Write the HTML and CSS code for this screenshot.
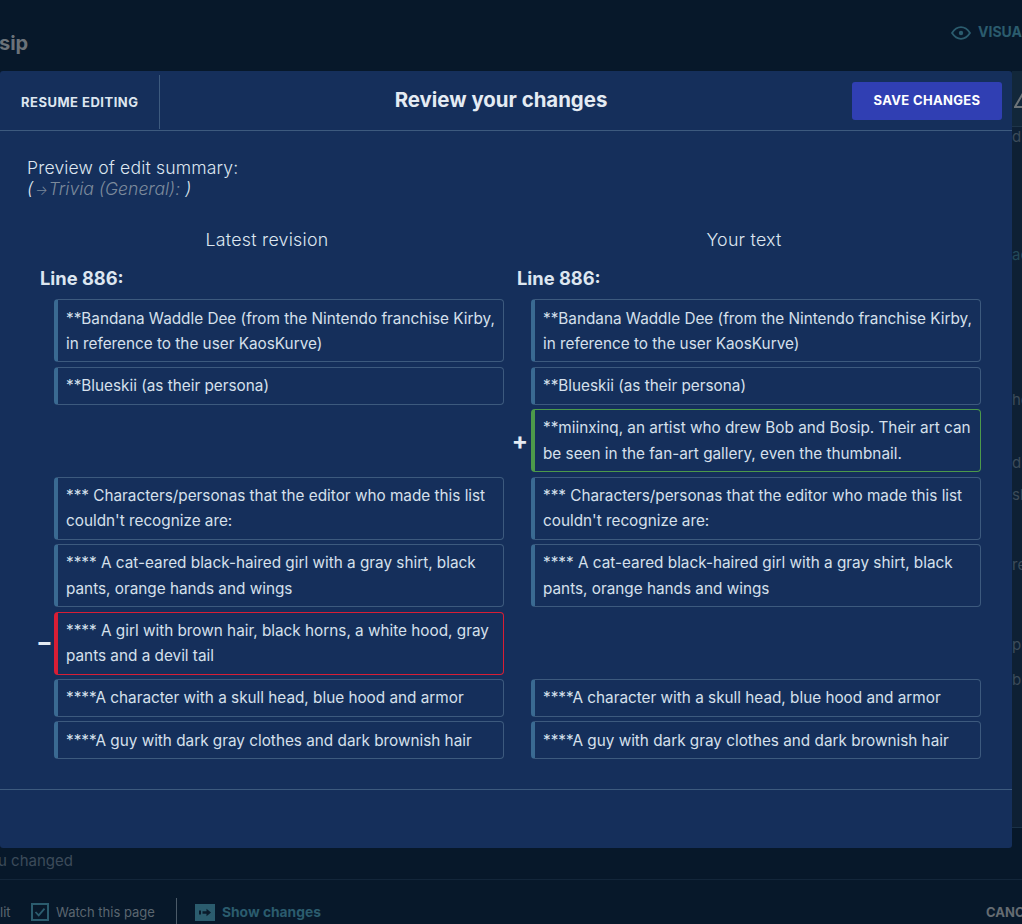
FILE: index.html
```html
<!DOCTYPE html>
<html lang="en">
<head>
<meta charset="utf-8">
<title>Review your changes</title>
<link rel="stylesheet" href="styles.css">
</head>
<body>
<div class="page">
  <header class="topbar">
    <h1 class="page-title">sip</h1>
    <div class="mode">
      <svg class="eye" width="20" height="14" viewBox="0 0 20 14" fill="none"><path d="M1 7c2.500-3.800 5.500-5.800 9-5.800s6.500 2 9 5.800c-2.500 3.800-5.500 5.800-9 5.800S3.500 10.800 1 7z" stroke="#2b5c6e" stroke-width="1.800"/><circle cx="10" cy="7" r="2.200" fill="#2b5c6e"/></svg>
      <span>VISUA</span>
    </div>
  </header>
  <div class="middle">
    <aside class="strip">
      <div class="strip-head">
        <svg width="14" height="22" viewBox="0 0 14 22" fill="none"><path d="M1 21 L12 2 L24 21 Z" stroke="#6c7378" stroke-width="2"/></svg>
      </div>
      <p class="frag f1">d</p>
      <p class="frag f2 teal">ac</p>
      <p class="frag f3">he</p>
      <p class="frag f4">di</p>
      <p class="frag f5">sh</p>
      <p class="frag f6">re</p>
      <p class="frag f7">pla</p>
      <p class="frag f8">b</p>
    </aside>
  </div>
  <div class="summary-row"><span>u changed</span></div>
  <footer class="bottombar">
    <span class="muted lit">lit</span>
    <svg class="check" width="18" height="18" viewBox="0 0 18 18" fill="none"><rect x="1" y="1" width="16" height="16" stroke="#2b5c6e" stroke-width="2"/><path d="M4.500 9l3.200 3.400 5.800-6.800" stroke="#2b5c6e" stroke-width="1.800"/></svg>
    <span class="muted watch">Watch this page</span>
    <span class="vr"></span>
    <svg class="diff-icon" width="20" height="17" viewBox="0 0 20 17"><rect width="20" height="17" fill="#2b5c6e"/><path d="M4 6.500h2v4H4zM7.500 7.300h4V4.800l4.500 3.700-4.500 3.700V9.700h-4z" fill="#0a1b2c"/></svg>
    <span class="show">Show changes</span>
    <span class="cancel">CANC</span>
  </footer>

  <section class="modal">
    <div class="modal-head">
      <button class="resume">RESUME EDITING</button>
      <h2 class="modal-title">Review your changes</h2>
      <button class="save">SAVE CHANGES</button>
    </div>
    <div class="modal-body">
      <p class="preview">Preview of edit summary:<br><em class="sum-line">(<span class="sum"><span class="arrow">→</span>Trivia (General): </span>)</em></p>
      <div class="columns">
        <div class="col-title">Latest revision</div>
        <div class="col-title">Your text</div>
      </div>
      <div class="diff">
        <div class="line-no">Line 886:</div>
        <div class="line-no">Line 886:</div>

        <span></span><div class="cell">**Bandana Waddle Dee (from the Nintendo franchise Kirby, in reference to the user KaosKurve)</div>
        <span></span><div class="cell">**Bandana Waddle Dee (from the Nintendo franchise Kirby, in reference to the user KaosKurve)</div>

        <span></span><div class="cell">**Blueskii (as their persona)</div>
        <span></span><div class="cell">**Blueskii (as their persona)</div>

        <span></span><span></span>
        <span class="mark">+</span><div class="cell added">**miinxinq, an artist who drew Bob and Bosip. Their art can be seen in the fan-art gallery, even the thumbnail.</div>

        <span></span><div class="cell">*** Characters/personas that the editor who made this list couldn't recognize are:</div>
        <span></span><div class="cell">*** Characters/personas that the editor who made this list couldn't recognize are:</div>

        <span></span><div class="cell">**** A cat-eared black-haired girl with a gray shirt, black pants, orange hands and wings</div>
        <span></span><div class="cell">**** A cat-eared black-haired girl with a gray shirt, black pants, orange hands and wings</div>

        <span class="mark minus">−</span><div class="cell removed">**** A girl with brown hair, black horns, a white hood, gray pants and a devil tail</div>
        <span></span><span></span>

        <span></span><div class="cell">****A character with a skull head, blue hood and armor</div>
        <span></span><div class="cell">****A character with a skull head, blue hood and armor</div>

        <span></span><div class="cell">****A guy with dark gray clothes and dark brownish hair</div>
        <span></span><div class="cell">****A guy with dark gray clothes and dark brownish hair</div>
      </div>
    </div>
  </section>
</div>
</body>
</html>
```
FILE: styles.css
```css
* { box-sizing: border-box; }
html, body { margin: 0; padding: 0; }
body {
  background: #07182a;
  font-family: "Inter", "Liberation Sans", sans-serif;
  color: #dde6f0;
}
.page {
  position: relative;
  width: 1022px;
  height: 924px;
  overflow: hidden;
  display: flex;
  flex-direction: column;
}
.topbar {
  height: 71px;
  flex: none;
  display: flex;
  justify-content: space-between;
  align-items: flex-start;
}
.page-title {
  margin: 31px 0 0 -1px;
  font-size: 20px;
  line-height: 24px;
  font-weight: 700;
  color: #6b7279;
}
.mode {
  display: flex;
  align-items: flex-start;
  gap: 7px;
  width: 71px;
  margin-top: 23px;
  font-size: 14px;
  font-weight: 700;
  line-height: 17px;
  color: #2b5c6e;
  overflow: hidden;
  white-space: nowrap;
}
.eye { flex: none; margin-top: 3px; }
.middle {
  height: 757px;
  flex: none;
  display: flex;
  justify-content: flex-end;
}
.strip {
  width: 10px;
  background: #0e2034;
  border-bottom: 1px solid #1b3146;
  overflow: hidden;
  color: #3c4b5a;
  font-size: 15px;
  line-height: 20px;
}
.strip-head {
  height: 56px;
  padding: 15px 0 0 2px;
  background: #12273a;
  border-bottom: 1px solid #1f3549;
}
.frag { margin: 0; white-space: nowrap; }
.teal { color: #23495a; }
.f1 { margin-top: 0; }
.f2 { margin-top: 98px; }
.f3 { margin-top: 125px; }
.f4 { margin-top: 43px; }
.f5 { margin-top: 12px; }
.f6 { margin-top: 50px; }
.f7 { margin-top: 60px; }
.f8 { margin-top: 15px; }
.summary-row {
  height: 52px;
  flex: none;
  border-bottom: 1px solid #13263a;
  padding-top: 23px;
  color: #3c4b5a;
  font-size: 15px;
  line-height: 20px;
}
.summary-row span { display: block; margin-left: -2px; }
.bottombar {
  flex: 1;
  display: flex;
  align-items: center;
  padding-top: 19px;
  font-size: 13px;
  white-space: nowrap;
}
.muted { color: #5b6670; }
.lit { width: 31px; }
.check { flex: none; margin-right: 7px; }
.watch { width: 121px; }
.vr { width: 1px; height: 27px; background: #4b5a68; margin-top: -1px; margin-left: -1px; }
.diff-icon { flex: none; margin-left: 18px; margin-right: 7px; }
.show { font-weight: 700; font-size: 13.800px; color: #2b5c6e; }
.cancel { margin-left: auto; width: 36px; overflow: hidden; font-weight: 700; color: #656c72; }

.modal {
  position: absolute;
  top: 71px;
  left: 0;
  width: 1012px;
  height: 777px;
  background: #152f5b;
  border-radius: 3px;
  display: flex;
  flex-direction: column;
}
.modal-head {
  height: 60px;
  flex: none;
  display: flex;
  align-items: center;
  border-bottom: 1px solid #3d5a7e;
}
.resume {
  height: 54px;
  width: 160px;
  padding: 0 0 0 21px;
  margin-top: 3px;
  text-align: left;
  background: none;
  border: 0;
  border-right: 1px solid #3d5a7e;
  font: 700 13px "Inter", sans-serif;
  letter-spacing: .5px;
  color: #dde6f0;
  white-space: nowrap;
}
.modal-title {
  flex: 1;
  margin: -2px 10px 0 0;
  text-align: center;
  font-size: 20.400px;
  font-weight: 700;
  color: #e4ebf3;
}
.save {
  width: 150px;
  height: 38px;
  margin-right: 10px;
  padding: 0 0 2px;
  background: #303fb3;
  border: 0;
  border-radius: 3px;
  font: 700 13px "Inter", sans-serif;
  letter-spacing: .35px;
  color: #fff;
}
.modal-body {
  flex: 1;
  margin-bottom: 58px;
  padding: 26px 0 0 27px;
  border-bottom: 1px solid #3d5a7e;
}
.preview {
  margin: 0;
  font-size: 17.600px;
  letter-spacing: .15px;
  line-height: 21px;
  font-weight: 300;
}
.sum-line { letter-spacing: 0; }
.sum { color: #7c8a9b; }
.arrow { font-size: 13px; padding: 0 1px 0 2px; }
.columns {
  display: grid;
  grid-template-columns: 474px 474px;
  column-gap: 3px;
  margin: 28px 0 0 3px;
}
.col-title {
  text-align: center;
  font-size: 17.800px;
  letter-spacing: .25px;
  line-height: 22px;
  font-weight: 300;
}
.diff {
  display: grid;
  grid-template-columns: 24px 450px 27px 450px;
  row-gap: 4.300px;
  margin: 16px 0 0 3px;
  font-size: 15.300px;
  line-height: 25.200px;
}
.line-no {
  grid-column: span 2;
  padding-left: 10px;
  font-size: 18.300px;
  line-height: 22px;
  font-weight: 700;
  margin-bottom: 6px;
}
.line-no:nth-child(2) { margin-left: 3px; }
.cell {
  padding: 5.400px 4px 5.400px 8px;
  border: 1px solid #3d5a7e;
  border-left: 4px solid #3a6a92;
  border-radius: 4px;
  color: #d6e0ec;
  font-weight: 400;
}
.added { border-color: #4c9a4a; }
.removed { border-color: #d81e35; }
.mark {
  align-self: center;
  padding-left: 5px;
  text-align: center;
  font-size: 24px;
  font-weight: 700;
  color: #e4ebf3;
}
.minus { padding-bottom: 3px; }
```
